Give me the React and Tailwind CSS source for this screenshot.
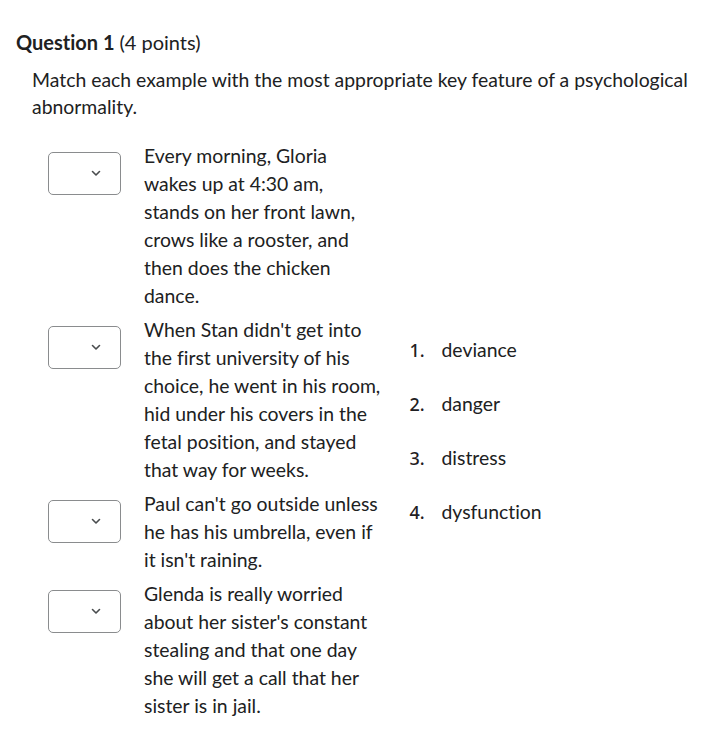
import React from 'react';

const rows = [
  "Every morning, Gloria wakes up at 4:30 am, stands on her front lawn, crows like a rooster, and then does the chicken dance.",
  "When Stan didn't get into the first university of his choice, he went in his room, hid under his covers in the fetal position, and stayed that way for weeks.",
  "Paul can't go outside unless he has his umbrella, even if it isn't raining.",
  "Glenda is really worried about her sister's constant stealing and that one day she will get a call that her sister is in jail.",
];

const choices = ['deviance', 'danger', 'distress', 'dysfunction'];

const Chevron = () => (
  <svg width="10" height="7" viewBox="0 0 10 7" fill="none">
    <path d="M1.5 1.5 L5 5 L8.5 1.5" stroke="#494c4e" strokeWidth="1.6" strokeLinecap="round" strokeLinejoin="round" />
  </svg>
);

const App = () => {
  return (
    <div className="min-h-[751px] bg-white pt-[28px] px-4 font-['Lato',sans-serif] text-[#202122] [font-variant-ligatures:none]">
      <h2 className="text-[20px] leading-[28px] font-bold">
        Question 1 <span className="font-normal">(4 points)</span>
      </h2>
      <p className="mt-[10px] pl-4 text-[19.4px] leading-[27px]">
        Match each example with the most appropriate key feature of a psychological abnormality.
      </p>

      <div className="mt-[22px] pl-8 flex items-center">
        <div className="flex flex-col gap-[6px]">
          {rows.map((text, i) => (
            <div key={i} className="flex">
              <div className="mt-[10px] w-[73px] h-[43px] shrink-0 rounded-[5px] border border-[#8a8c8e] bg-white flex items-center justify-end pr-[19px]">
                <Chevron />
              </div>
              <p className="ml-[23px] w-[237.5px] text-[19.4px] leading-[28px]">{text}</p>
            </div>
          ))}
        </div>

        <ol className="ml-[28px] flex flex-col gap-[26px]">
          {choices.map((c, i) => (
            <li key={c} className="flex text-[19.4px] leading-[28px]">
              <span className="w-[32px] font-['Noto_Sans',sans-serif] font-medium text-[18px] text-[#1f2022]">{i + 1}.</span>
              <span>{c}</span>
            </li>
          ))}
        </ol>
      </div>
    </div>
  );
};

export default App;
